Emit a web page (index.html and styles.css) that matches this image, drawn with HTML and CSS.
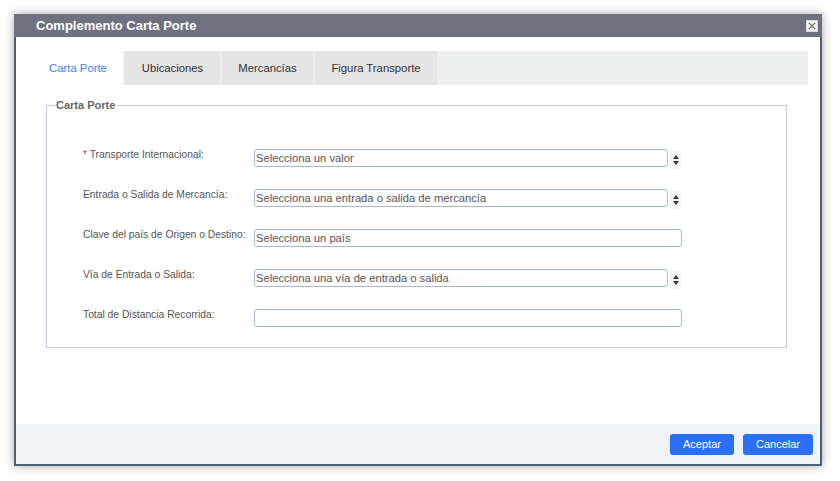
FILE: index.html
```html
<!DOCTYPE html>
<html lang="es">
<head>
<meta charset="utf-8">
<title>Complemento Carta Porte</title>
<link rel="stylesheet" href="styles.css">
</head>
<body>
<div class="dialog">
  <div class="titlebar">
    <span class="title">Complemento Carta Porte</span>
    <span class="close" aria-label="Cerrar">
      <svg width="12" height="12" viewBox="0 0 12 12"><rect x="0.5" y="0.5" width="11" height="11" fill="#f2f2f2" stroke="#d8d8d8"/><path d="M3 3L9 9M9 3L3 9" stroke="#7a7a7a" stroke-width="1.4"/><path d="M2.5 3.5L3.5 2.5M8.5 2.5L9.5 3.5M2.5 8.5L3.5 9.5M8.5 9.5L9.5 8.5" stroke="#9a9a9a" stroke-width="1"/></svg>
    </span>
  </div>
  <div class="content">
    <div class="tabs">
      <div class="tab active">Carta Porte</div>
      <div class="tab">Ubicaciones</div>
      <div class="tab">Mercancías</div>
      <div class="tab">Figura Transporte</div>
    </div>
    <fieldset class="group">
      <legend>Carta Porte</legend>
      <div class="form">
        <div class="row">
          <label><span class="req">*</span> Transporte Internacional:</label>
          <div class="control">
            <div class="field sel">Selecciona un valor</div>
            <span class="spin"><svg width="6" height="12" viewBox="0 0 6 12"><path d="M3 1L6 5H0Z" fill="#333"/><path d="M3 11L0 7H6Z" fill="#333"/></svg></span>
          </div>
        </div>
        <div class="row">
          <label>Entrada o Salida de Mercancía:</label>
          <div class="control">
            <div class="field sel">Selecciona una entrada o salida de mercancía</div>
            <span class="spin"><svg width="6" height="12" viewBox="0 0 6 12"><path d="M3 1L6 5H0Z" fill="#333"/><path d="M3 11L0 7H6Z" fill="#333"/></svg></span>
          </div>
        </div>
        <div class="row">
          <label>Clave del país de Origen o Destino:</label>
          <div class="control">
            <div class="field wide">Selecciona un país</div>
          </div>
        </div>
        <div class="row">
          <label>Vía de Entrada o Salida:</label>
          <div class="control">
            <div class="field sel">Selecciona una vía de entrada o salida</div>
            <span class="spin"><svg width="6" height="12" viewBox="0 0 6 12"><path d="M3 1L6 5H0Z" fill="#333"/><path d="M3 11L0 7H6Z" fill="#333"/></svg></span>
          </div>
        </div>
        <div class="row">
          <label>Total de Distancia Recorrida:</label>
          <div class="control">
            <div class="field wide"></div>
          </div>
        </div>
      </div>
    </fieldset>
  </div>
  <div class="footer">
    <button class="btn">Aceptar</button>
    <button class="btn cancel">Cancelar</button>
  </div>
</div>
</body>
</html>
```
FILE: styles.css
```css
* { box-sizing: border-box; }
html, body { margin: 0; padding: 0; background: #ffffff; }
body {
  font-family: "Liberation Sans", Arial, Helvetica, sans-serif;
  width: 840px;
  height: 481px;
  overflow: hidden;
}
.dialog {
  margin: 14px 0 0 14px;
  width: 808px;
  height: 452px;
  display: flex;
  flex-direction: column;
  border: 2px solid #4e5f7a;
  border-top: none;
  box-shadow: 0 0 9px rgba(0, 0, 0, 0.35);
  background: #fff;
}
.titlebar {
  height: 23px;
  margin: 0 -2px;
  background: #6f7181;
  display: flex;
  align-items: center;
  justify-content: space-between;
  padding: 0 4px 0 22px;
}
.title {
  color: #fff;
  font-weight: bold;
  font-size: 13px;
}
.close { display: flex; width: 12px; height: 12px; margin-top: 1px; }
.content {
  flex: 1;
  padding: 14px 12px 0 17px;
}
.tabs {
  height: 34px;
  background: #eef0f0;
  display: flex;
  gap: 2px;
}
.tab {
  background: #e5e5e5;
  color: #333;
  font-size: 11.3px;
  display: flex;
  align-items: center;
  justify-content: center;
  height: 34px;
}
.tab:nth-child(1) { width: 90px; }
.tab:nth-child(2) { width: 95px; }
.tab:nth-child(3) { width: 91px; }
.tab:nth-child(4) { width: 122px; }
.tab.active { background: #fff; color: #3b7ff2; }
.group {
  margin: 14px 0 0 13px;
  width: 741px;
  border: 1px solid #c9c8da;
  padding: 0 0 20px 36px;
  min-width: 0;
}
.group legend {
  margin-left: -28px;
  padding: 0 1px;
  font-size: 11px;
  font-weight: bold;
  color: #666;
  line-height: 13px;
}
.form {
  padding-top: 37px;
  display: flex;
  flex-direction: column;
  gap: 22px;
}
.row {
  display: grid;
  grid-template-columns: 171px auto;
  height: 18px;
}
.row label {
  font-size: 10.3px;
  line-height: 12px;
  color: #555;
  white-space: nowrap;
  align-self: start;
  margin-top: 0;
}
.req { color: #d9363e; }
.control { display: flex; align-items: flex-start; gap: 2px; }
.field {
  height: 18px;
  border: 1px solid #a8b8cc;
  border-radius: 3px;
  font-size: 11.2px;
  color: #555;
  line-height: 16px;
  padding-left: 1px;
  white-space: nowrap;
  overflow: hidden;
}
.field.sel { width: 414px; }
.field.wide { width: 428px; }
.spin {
  width: 11px;
  height: 18px;
  background: #f3f3f3;
  display: flex;
  align-items: center;
  justify-content: center;
  margin-top: 2px;
}
.footer {
  height: 40px;
  background: #eff3f7;
  display: flex;
  justify-content: flex-end;
  align-items: center;
  gap: 9px;
  padding: 0 7px 0 0;
}
.btn {
  font-family: "Liberation Sans", Arial, Helvetica, sans-serif;
  height: 21px;
  width: 64px;
  border: none;
  border-radius: 3px;
  background: #2a6ff8;
  color: #fff;
  font-size: 11px;
  padding: 0;
}
.btn.cancel { width: 70px; }
```
